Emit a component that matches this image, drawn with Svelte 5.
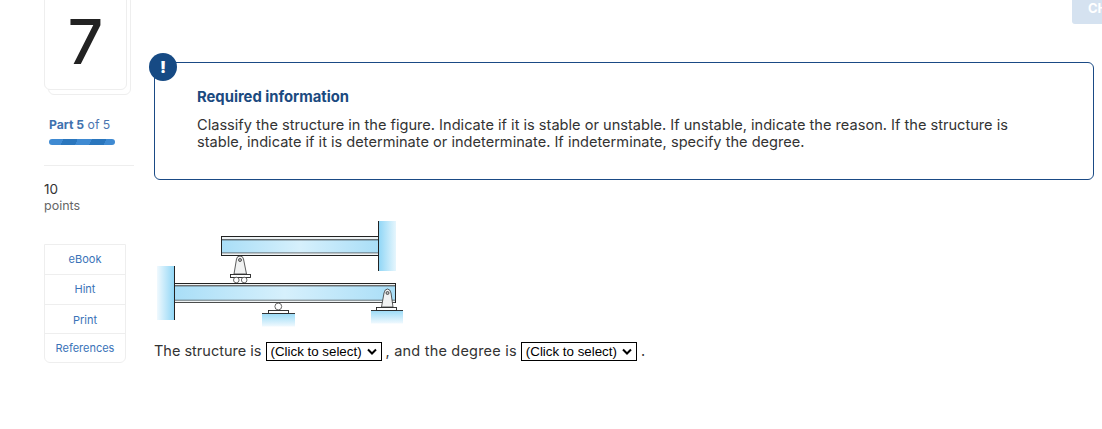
<script>
  const tools = ['eBook', 'Hint', 'Print', 'References'];
</script>

<div class="page">
  <aside class="side">
    <div class="stack">
      <div class="card">7</div>
    </div>
    <div class="part">
      <div class="part-label"><b>Part 5</b> of 5</div>
      <div class="bar"></div>
    </div>
    <div class="points">
      <div class="num">10</div>
      <div class="unit">points</div>
    </div>
    <nav class="tools">
      {#each tools as t}
        <div class="tool">{t}</div>
      {/each}
    </nav>
  </aside>

  <main class="main">
    <div class="toolbar"><button class="check">CH</button></div>
    <section class="alert">
      <span class="badge">!</span>
      <h2>Required information</h2>
      <p>Classify the structure in the figure. Indicate if it is stable or unstable. If unstable, indicate the reason. If the structure is stable, indicate if it is determinate or indeterminate. If indeterminate, specify the degree.</p>
    </section>

    <svg class="figure" width="270" height="125" viewBox="150 210 270 125" aria-label="Beam figure">
      <defs>
        <linearGradient id="beam" x1="0" x2="1" y1="0" y2="0">
          <stop offset="0" stop-color="#a9def7" />
          <stop offset="0.5" stop-color="#d6f0fc" />
          <stop offset="1" stop-color="#a9def7" />
        </linearGradient>
        <linearGradient id="wallR" x1="0" x2="1" y1="0" y2="0">
          <stop offset="0" stop-color="#8fd6f6" />
          <stop offset="1" stop-color="#e6f6fd" />
        </linearGradient>
        <linearGradient id="wallL" x1="0" x2="1" y1="0" y2="0">
          <stop offset="0" stop-color="#f0f9fe" />
          <stop offset="1" stop-color="#8fd6f6" />
        </linearGradient>
        <linearGradient id="ground" x1="0" x2="0" y1="0" y2="1">
          <stop offset="0" stop-color="#9bdbf7" />
          <stop offset="1" stop-color="#f0f9fe" />
        </linearGradient>
      </defs>

      <!-- walls -->
      <rect x="378.5" y="221" width="17.5" height="50" fill="url(#wallR)" />
      <line x1="378.5" y1="221" x2="378.5" y2="271" stroke="#222" stroke-width="1" />
      <rect x="157" y="266" width="17.5" height="54" fill="url(#wallL)" />
      <line x1="174.5" y1="266" x2="174.5" y2="320" stroke="#222" stroke-width="1" />

      <!-- upper beam -->
      <rect x="221.5" y="236.5" width="157" height="19" fill="url(#beam)" stroke="#222" />
      <rect x="222" y="237" width="156" height="2.6" fill="#eef3f5" />
      <line x1="221.5" y1="239.8" x2="378.5" y2="239.8" stroke="#222" stroke-width="0.9" />
      <rect x="222" y="253" width="156" height="2" fill="#eef3f5" />
      <line x1="221.5" y1="252.9" x2="378.5" y2="252.9" stroke="#444" stroke-width="0.7" />

      <!-- support under the upper beam -->
      <path d="M234 274 L236.5 259 Q237 256 240 256 Q243 256 243.5 259 L246.5 274 Z" fill="#f1f2f2" stroke="#333" stroke-width="0.8" />
      <circle cx="240" cy="260" r="1.5" fill="#bbb" stroke="#333" stroke-width="0.8" />
      <rect x="230.5" y="274.5" width="20" height="3" fill="#fff" stroke="#222" stroke-width="0.9" />
      <circle cx="236.3" cy="280" r="2.8" fill="#fff" stroke="#444" stroke-width="0.8" />
      <circle cx="244.2" cy="280" r="2.8" fill="#fff" stroke="#444" stroke-width="0.8" />

      <!-- lower beam -->
      <rect x="174.5" y="283.5" width="221" height="19" fill="url(#beam)" stroke="#222" />
      <rect x="175" y="284" width="220" height="2" fill="#eef3f5" />
      <line x1="174.5" y1="285.8" x2="395.5" y2="285.8" stroke="#222" stroke-width="0.9" />
      <rect x="175" y="300.4" width="220" height="1.8" fill="#eef3f5" />
      <line x1="174.5" y1="300.2" x2="395.5" y2="300.2" stroke="#444" stroke-width="0.7" />

      <!-- middle support -->
      <circle cx="278.3" cy="306.5" r="3.4" fill="#fff" stroke="#444" stroke-width="0.8" />
      <rect x="268.5" y="310.5" width="20" height="3" fill="#fff" stroke="#222" stroke-width="0.9" />
      <rect x="262" y="313.5" width="33" height="13" fill="url(#ground)" />
      <line x1="262" y1="313.5" x2="295" y2="313.5" stroke="#222" stroke-width="0.9" />

      <!-- right support -->
      <path d="M381.5 307 L384 293 Q384.8 289 387.5 289 Q390.2 289 391 293 L393 307 Z" fill="#f1f2f2" stroke="#333" stroke-width="0.8" />
      <circle cx="387.5" cy="293" r="1.5" fill="#bbb" stroke="#333" stroke-width="0.8" />
      <rect x="376.5" y="307.5" width="20" height="3" fill="#fff" stroke="#222" stroke-width="0.9" />
      <rect x="371" y="310.5" width="32" height="13" fill="url(#ground)" />
      <line x1="371" y1="310.5" x2="403" y2="310.5" stroke="#222" stroke-width="0.9" />
    </svg>

    <div class="question">
      The structure is
      <select><option>(Click to select)</option></select>
      <span class="joiner">, and the degree is</span>
      <select><option>(Click to select)</option></select>
      .
    </div>
  </main>
</div>

<style>
  :global(body) {
    margin: 0;
    background: #fff;
    overflow: hidden;
  }
  .page {
    display: flex;
    width: 1102px;
    height: 429px;
    overflow: hidden;
    box-sizing: border-box;
    padding-left: 44px;
    font-family: "Inter", "Liberation Sans", sans-serif;
    color: #333;
  }
  .side {
    width: 90px;
    flex: none;
  }
  .stack {
    position: relative;
    width: 83px;
    margin-top: -10px;
  }
  .stack::before {
    content: "";
    position: absolute;
    left: 4px;
    top: 5px;
    width: 83px;
    height: 100px;
    box-sizing: border-box;
    border: 1px solid #eee;
    border-radius: 6px;
  }
  .card {
    position: relative;
    box-sizing: border-box;
    width: 83px;
    height: 100px;
    background: #fff;
    border: 1px solid #eee;
    border-radius: 6px;
    font-size: 62px;
    font-weight: 500;
    line-height: 96px;
    text-align: center;
    color: #222;
    padding-top: 3px;
  }
  .part {
    margin-top: 27px;
    padding-left: 5px;
    height: 48px;
    border-bottom: 1px solid #eee;
  }
  .part-label {
    font-size: 12.2px;
    line-height: 16px;
    color: #4a75b0;
  }
  .part-label b {
    color: #3f72ae;
  }
  .bar {
    width: 66px;
    height: 6px;
    margin-top: 6px;
    border-radius: 3px;
    background: repeating-linear-gradient(115deg, #3f8ad2 0 13px, #2a76bd 13px 26px);
  }
  .points {
    margin-top: 15px;
  }
  .num {
    font-size: 13.5px;
    line-height: 16px;
  }
  .unit {
    font-size: 12.5px;
    line-height: 17px;
    color: #666;
  }
  .tools {
    width: 82px;
    margin-top: 30px;
    box-sizing: border-box;
    border: 1px solid #eee;
    border-radius: 0 0 6px 6px;
  }
  .tool {
    height: 30px;
    line-height: 29px;
    box-sizing: border-box;
    text-align: center;
    font-size: 11px;
    color: #3a73b8;
    border-bottom: 1px solid #eee;
  }
  .tool:nth-child(3) {
    height: 29px;
    line-height: 30px;
  }
  .tool:last-child {
    border-bottom: 0;
    height: 28px;
  }
  .main {
    width: 940px;
    margin-left: 20px;
    flex: none;
  }
  .toolbar {
    display: flex;
    justify-content: flex-end;
    margin-right: -8px;
    height: 24px;
  }
  .check {
    width: 30px;
    height: 24px;
    padding: 0 0 8px 16px;
    border: 0;
    border-radius: 0 0 0 3px;
    overflow: hidden;
    white-space: nowrap;
    text-align: left;
    background: #d5e2f0;
    color: #fff;
    font: 700 13px "Inter", sans-serif;
  }
  .alert {
    position: relative;
    box-sizing: border-box;
    height: 118px;
    margin-top: 38px;
    padding: 25px 64px 0 42px;
    border: 1px solid #1a4a85;
    border-radius: 6px;
  }
  .badge {
    position: absolute;
    left: -6px;
    top: -10px;
    width: 28px;
    height: 28px;
    border-radius: 50%;
    background: #164a84;
    color: #fff;
    font-weight: 900;
    font-size: 16px;
    line-height: 28px;
    text-align: center;
  }
  .alert h2 {
    margin: 0;
    font-size: 14.8px;
    line-height: 18px;
    font-weight: 700;
    color: #1b4a80;
  }
  .alert p {
    margin: 11px 0 0;
    font-size: 14.6px;
    line-height: 17px;
    color: #333;
  }
  .figure {
    display: block;
    margin: 30px 0 0 -4px;
  }
  .question {
    margin-top: 6px;
    font-size: 14.5px;
    line-height: 20px;
    color: #333;
  }
  .joiner {
    letter-spacing: 0.2px;
  }
  select {
    appearance: none;
    box-sizing: border-box;
    width: 116px;
    height: 19px;
    margin: 0;
    padding: 0 16px 0 4px;
    border: 1px solid #000;
    border-radius: 0;
    background: #fff url("data:image/svg+xml,%3Csvg xmlns='http://www.w3.org/2000/svg' width='10' height='7'%3E%3Cpath d='M1 1.5l4 4 4-4' fill='none' stroke='%23000' stroke-width='2'/%3E%3C/svg%3E") no-repeat right 4px center;
    color: #000;
    font: 13.33px "Liberation Sans", Arial, sans-serif;
    vertical-align: 0;
  }
</style>
